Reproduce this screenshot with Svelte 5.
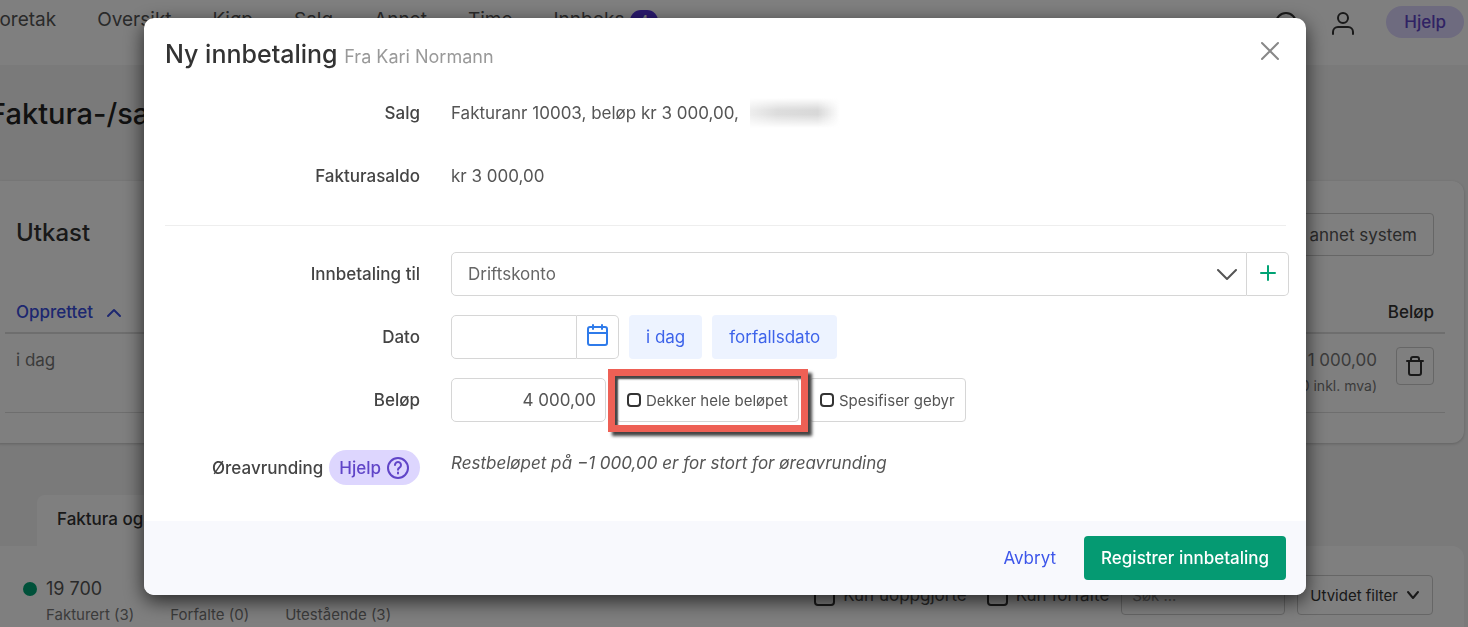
<script>
    let account = $state('Driftskonto');
    let date = $state('');
    let amount = $state('4 000,00');
    let coversAll = $state(false);
    let specifyFee = $state(false);
    let onlyOpen = $state(false);
    let onlyDue = $state(false);
    let search = $state('');

    const menu = ['Foretak', 'Oversikt', 'Kjøp', 'Salg', 'Annet', 'Time'];

    const totals = [
        { value: '19 700', label: 'Fakturert (3)', color: '#00a374' },
        { value: '0', label: 'Forfalte (0)', color: '' },
        { value: '19 700', label: 'Utestående (3)', color: '' }
    ];
</script>

<div class="page">
    <header>
        <nav>
            {#each menu as item}
                <a href="#top">{item}</a>
            {/each}
            <a href="#top">Innboks <span class="badge">4</span></a>
        </nav>
        <div class="tools">
            <button class="icon" aria-label="Søk">
                <svg width="26" height="26" viewBox="0 0 26 26"><circle cx="12" cy="11" r="10" /><path d="M19 18l6 6" /></svg>
            </button>
            <button class="icon" aria-label="Bruker">
                <svg width="26" height="26" viewBox="0 0 26 26"><circle cx="13" cy="6" r="5" /><path d="M3 22v-2a5 5 0 0 1 5-5h10a5 5 0 0 1 5 5v2" /></svg>
            </button>
            <button class="pill top-help">Hjelp</button>
        </div>
    </header>

    <h1>Faktura-/salgsoversikt</h1>

    <section class="card drafts">
        <div class="card-head">
            <h2>Utkast</h2>
            <button class="outline">Importer fra annet system</button>
        </div>
        <table>
            <thead>
                <tr>
                    <th class="sorted">
                        Opprettet
                        <svg width="16" height="10" viewBox="0 0 16 10"><path d="M2 8l6-6 6 6" /></svg>
                    </th>
                    <th class="right" colspan="2">Beløp</th>
                </tr>
            </thead>
            <tbody>
                <tr>
                    <td>i dag</td>
                    <td class="right">1 000,00<small>(1 250,00 inkl. mva)</small></td>
                    <td class="action">
                        <button class="trash" aria-label="Slett">
                            <svg width="20" height="22" viewBox="0 0 20 22"><path d="M2 6h16M4 6v12a2 2 0 0 0 2 2h8a2 2 0 0 0 2-2V6M6 6V4a2 2 0 0 1 2-2h4a2 2 0 0 1 2 2v2" /></svg>
                        </button>
                    </td>
                </tr>
            </tbody>
        </table>
    </section>

    <div class="tab">Faktura og ordre</div>
    <section class="card list">
        <div class="totals">
            {#each totals as total}
                <div class="total">
                    <strong>
                        {#if total.color}<i class="dot" style:background={total.color}></i>{/if}{total.value}
                    </strong>
                    <span>{total.label}</span>
                </div>
            {/each}
        </div>
        <div class="filters">
            <label><input type="checkbox" bind:checked={onlyOpen} /> Kun uoppgjorte</label>
            <label><input type="checkbox" bind:checked={onlyDue} /> Kun forfalte</label>
            <input class="search" type="text" placeholder="Søk ..." aria-label="Søk" bind:value={search} />
            <button class="outline more">
                Utvidet filter
                <svg width="14" height="10" viewBox="0 0 14 10"><path d="M2 2l5 6 5-6" /></svg>
            </button>
        </div>
    </section>
</div>

<div class="backdrop">
    <div class="modal" role="dialog" aria-modal="true" aria-labelledby="modal-title">
        <div class="modal-head">
            <h3 id="modal-title">Ny innbetaling <small>Fra Kari Normann</small></h3>
            <button class="close" aria-label="Lukk">
                <svg width="20" height="20" viewBox="0 0 20 20"><path d="M2 2l16 16M18 2L2 18" /></svg>
            </button>
        </div>

        <div class="modal-body">
            <div class="row">
                <span class="label">Salg</span>
                <div class="value">Fakturanr 10003, beløp kr 3 000,00, <span class="hidden-name"></span></div>
            </div>
            <div class="row">
                <span class="label">Fakturasaldo</span>
                <div class="value">kr 3 000,00</div>
            </div>

            <hr />

            <div class="row">
                <label class="label" for="account">Innbetaling til</label>
                <div class="group">
                    <div class="select">
                        <select id="account" bind:value={account}>
                            <option>Driftskonto</option>
                        </select>
                        <svg width="20" height="12" viewBox="0 0 20 12"><path d="M1 1l9 9 9-9" /></svg>
                    </div>
                    <button class="addon add" aria-label="Ny konto">
                        <svg width="18" height="18" viewBox="0 0 18 18"><path d="M9 2v14M2 9h14" /></svg>
                    </button>
                </div>
            </div>

            <div class="row">
                <label class="label" for="date">Dato</label>
                <div class="controls">
                    <div class="group date">
                        <input id="date" type="text" bind:value={date} />
                        <button class="addon calendar" aria-label="Velg dato">
                            <svg width="22" height="24" viewBox="0 0 22 24"><rect x="1" y="3" width="19" height="18" rx="2" /><path d="M1 9h19M6 1v4M15 1v4" /></svg>
                        </button>
                    </div>
                    <button class="soft" onclick={() => (date = 'i dag')}>i dag</button>
                    <button class="soft">forfallsdato</button>
                </div>
            </div>

            <div class="row">
                <label class="label" for="amount">Beløp</label>
                <div class="controls">
                    <input id="amount" type="text" bind:value={amount} />
                    <label class="check marked"><input type="checkbox" bind:checked={coversAll} /> Dekker hele beløpet</label>
                    <label class="check"><input type="checkbox" bind:checked={specifyFee} /> Spesifiser gebyr</label>
                </div>
            </div>

            <div class="row rounding">
                <span class="label">
                    Øreavrunding
                    <button class="pill">
                        Hjelp
                        <svg width="24" height="24" viewBox="0 0 24 24"><circle cx="12" cy="12" r="10" /><path d="M9 9a3 3 0 1 1 4.500 2.600c-1 .6-1.500 1-1.500 2.200M12 16.500v1" /></svg>
                    </button>
                </span>
                <em class="value">Restbeløpet på −1 000,00 er for stort for øreavrunding</em>
            </div>
        </div>

        <div class="modal-foot">
            <button class="cancel">Avbryt</button>
            <button class="primary">Registrer innbetaling</button>
        </div>
    </div>
</div>

<style>
    :global(body) {
        font-family: Inter, 'Liberation Sans', sans-serif;
        font-size: 17px;
        color: #555;
    }

    .page {
        height: 100vh;
        overflow: hidden;
        background: #f4f4f4;
    }

    * {
        box-sizing: border-box;
    }

    button, input, select {
        font: inherit;
        color: inherit;
        margin: 0;
    }

    button {
        border: none;
        background: none;
        padding: 0;
        cursor: pointer;
        white-space: nowrap;
    }

    svg {
        fill: none;
        stroke: currentColor;
        stroke-width: 2;
        stroke-linecap: round;
        stroke-linejoin: round;
        flex: none;
    }

    header {
        display: flex;
        justify-content: space-between;
        height: 65px;
        background: #fff;
    }

    nav {
        display: flex;
        gap: 41px;
        margin-left: -11px;
        padding-top: 9px;
        line-height: 22px;
        font-size: 19px;
    }

    nav a {
        color: #555;
        text-decoration: none;
    }

    .badge {
        display: inline-block;
        width: 28px;
        border-radius: 11px;
        background: #5533dd;
        color: #fff;
        font-size: 14px;
        text-align: center;
    }

    .tools {
        display: flex;
        align-items: flex-start;
        gap: 30px;
        padding: 6px 4px 0 0;
    }

    .icon {
        height: 34px;
        color: #333;
    }

    .icon svg {
        display: block;
        margin-top: 4px;
    }

    .pill {
        display: flex;
        align-items: center;
        gap: 5px;
        height: 35px;
        padding: 0 10px;
        border-radius: 18px;
        background: #ddd6fe;
        color: #6045c8;
        font-weight: 500;
    }

    .top-help {
        height: 32px;
        padding: 0 18px;
    }

    h1 {
        margin: 0 0 0 -11px;
        padding: 32px 0 50px;
        font-size: 29px;
        line-height: 34px;
        font-weight: 500;
        color: #222;
    }

    .card {
        margin: 0 4px 0 -11px;
        background: #fff;
        border-radius: 12px;
        box-shadow: 0 1px 3px rgba(0, 0, 0, 0.2);
    }

    .drafts {
        height: 262px;
        padding: 32px 19px 0 16px;
    }

    .card-head {
        display: flex;
        justify-content: space-between;
        padding: 0 11px;
    }

    h2 {
        margin: 0;
        font-size: 24px;
        line-height: 40px;
        font-weight: 500;
        color: #333;
    }

    .outline {
        height: 43px;
        padding: 0 16px;
        border: 1px solid #ccc;
        border-radius: 4px;
    }

    table {
        width: 100%;
        margin-top: 36px;
        border-collapse: collapse;
    }

    th {
        height: 41px;
        padding: 0 11px;
        border-bottom: 2px solid #ddd;
        text-align: left;
        font-weight: 500;
        color: #333;
    }

    .sorted {
        color: #3b4fe0;
    }

    .sorted svg {
        margin-left: 8px;
    }

    td {
        height: 79px;
        padding: 16px 11px 0;
        border-bottom: 1px solid #ddd;
        vertical-align: top;
        color: #777;
        line-height: 20px;
    }

    td small {
        display: block;
        margin-top: 6px;
        font-size: 14px;
    }

    .right {
        text-align: right;
    }

    .action {
        width: 57px;
        padding: 13px 11px 0 8px;
        text-align: right;
    }

    .trash {
        display: inline-flex;
        align-items: center;
        justify-content: center;
        width: 38px;
        height: 38px;
        border: 1px solid #ccc;
        border-radius: 4px;
        color: #333;
    }

    .tab {
        width: 190px;
        height: 51px;
        margin: 52px 0 0 37px;
        padding: 0 20px;
        border-radius: 8px 8px 0 0;
        background: #fff;
        line-height: 48px;
        font-size: 17px;
        font-weight: 500;
        color: #333;
    }

    .list {
        display: flex;
        justify-content: space-between;
        align-items: flex-start;
        min-height: 200px;
        padding: 29px 31px 0 57px;
        box-shadow: none;
    }

    .totals {
        display: flex;
        gap: 36px;
    }

    .total strong {
        display: flex;
        align-items: center;
        font-size: 18px;
        line-height: 28px;
        font-weight: 400;
    }

    .total span {
        font-size: 15px;
        line-height: 24px;
        color: #777;
    }

    .dot {
        width: 14px;
        height: 14px;
        margin: 0 9px 0 -23px;
        border-radius: 50%;
    }

    .filters {
        display: flex;
        align-items: center;
        gap: 12px;
    }

    .filters label {
        display: flex;
        align-items: center;
        gap: 8px;
        font-size: 17px;
    }

    .filters label + label {
        margin-left: 8px;
    }

    input[type='checkbox'] {
        appearance: none;
        width: 21px;
        height: 21px;
        border: 2px solid #333;
        border-radius: 4px;
        background: #fff;
    }

    .search {
        width: 164px;
        height: 40px;
        padding: 0 10px;
        border: 1px solid #ccc;
        border-radius: 4px;
        font-size: 15px;
    }

    .search::placeholder {
        color: #999;
    }

    .more {
        display: flex;
        align-items: center;
        gap: 8px;
        height: 40px;
        padding: 0 12px;
        font-size: 15px;
        color: #333;
    }

    .backdrop {
        position: fixed;
        inset: 0;
        padding: 18px 18px 18px 0;
        background: rgba(0, 0, 0, 0.5);
    }

    .modal {
        max-width: 1162px;
        margin: 0 auto;
        border-radius: 10px;
        background: #fff;
        box-shadow: 0 6px 20px rgba(0, 0, 0, 0.7);
        overflow: hidden;
    }

    .modal-head {
        display: flex;
        justify-content: space-between;
        align-items: flex-start;
        height: 73px;
        padding: 20px 26px 0 21px;
    }

    h3 {
        margin: 0;
        font-size: 25px;
        line-height: 32px;
        font-weight: 500;
        color: #333;
    }

    h3 small {
        font-size: 18px;
        font-weight: 400;
        color: #999;
    }

    .close {
        padding-top: 3px;
        color: #888;
    }

    .modal-body {
        display: grid;
        gap: 19px;
        padding: 0 17px 36px 21px;
    }

    .row {
        display: grid;
        grid-template-columns: 255px 1fr;
        gap: 31px;
        align-items: center;
        min-height: 44px;
    }

    .label {
        display: flex;
        align-items: center;
        justify-content: flex-end;
        gap: 6px;
        color: #444;
        font-weight: 500;
    }

    .rounding .label {
        padding-top: 9px;
    }

    .value {
        display: flex;
        align-items: center;
        gap: 11px;
    }

    .hidden-name {
        width: 90px;
        height: 30px;
        background: linear-gradient(to right, #eee, #ddd 30%, #d8d8d8 75%, transparent);
        mask-image: linear-gradient(transparent, #000 40%, #000 55%, transparent);
    }

    hr {
        width: calc(100% - 3px);
        margin: 8px 0 7px;
        border: none;
        border-top: 1px solid #eee;
    }

    .group, .controls {
        display: flex;
    }

    .controls {
        gap: 10px;
    }

    .select {
        position: relative;
        flex: 1;
    }

    .select svg {
        position: absolute;
        right: 10px;
        top: 17px;
        color: #555;
        pointer-events: none;
    }

    select, .controls input[type='text'] {
        height: 44px;
        border: 1px solid #d6d6d6;
        border-radius: 5px;
        background: #fff;
        padding: 0 16px;
    }

    select {
        display: block;
        appearance: none;
        width: 100%;
        color: #666;
    }

    .group select, .group input[type='text'] {
        border-radius: 5px 0 0 5px;
    }

    .addon {
        display: flex;
        align-items: center;
        justify-content: center;
        width: 42px;
        height: 44px;
        padding-bottom: 2px;
        border: 1px solid #d6d6d6;
        border-left: none;
        border-radius: 0 5px 5px 0;
    }

    .add {
        color: #00a374;
    }

    .calendar {
        color: #2f7bea;
    }

    #date {
        width: 126px;
    }

    #amount {
        width: 155px;
        padding: 0 9px;
        text-align: right;
    }

    .soft {
        padding: 0 17px;
        border-radius: 4px;
        background: #edf3ff;
        color: #3d63ea;
    }

    .check {
        display: flex;
        align-items: center;
        gap: 5px;
        padding: 0 10px;
        border: 1px solid #d6d6d6;
        border-radius: 4px;
        font-size: 15px;
        white-space: nowrap;
    }

    .check input {
        width: 14px;
        height: 14px;
    }

    .marked {
        position: relative;
    }

    .marked::after {
        content: '';
        position: absolute;
        inset: -10px -10px -11px -9px;
        border: 7px solid #ee6055;
        box-shadow: 4px 4px 3px #444, inset 3px 3px 2px #444;
        pointer-events: none;
    }

    .modal-foot {
        display: flex;
        justify-content: flex-end;
        align-items: center;
        gap: 28px;
        height: 74px;
        padding: 0 20px;
        background: #f8f9fd;
    }

    .cancel {
        color: #3d56ea;
    }

    .primary {
        height: 44px;
        padding: 0 17px;
        border-radius: 4px;
        background: #059a72;
        color: #fff;
        font-weight: 500;
    }
</style>
